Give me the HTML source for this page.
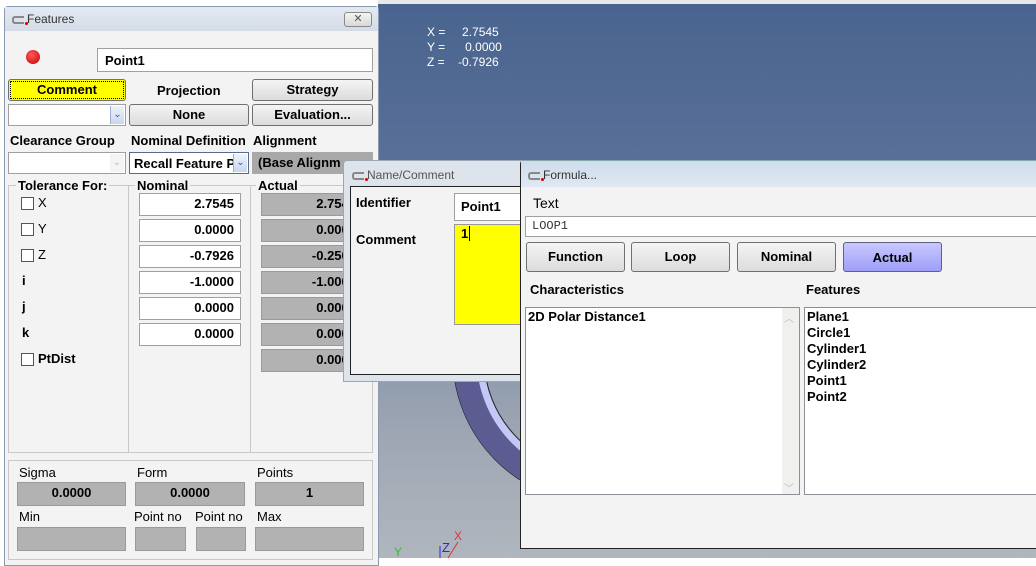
<!DOCTYPE html>
<html><head><meta charset="utf-8"><style>
*{box-sizing:border-box;margin:0;padding:0}
body{width:1036px;height:558px;overflow:hidden;position:relative;font-family:"Liberation Sans",sans-serif;font-size:13px;color:#000;background:#fff}
.a{position:absolute}
.b{font-weight:bold}
.btn{position:absolute;border:1px solid #707070;border-radius:3px;background:linear-gradient(#f4f4f4,#dcdcdc);font-weight:bold;text-align:center;line-height:20px;font-size:13px}
.inp{position:absolute;background:#fff;border:1px solid #a0a0a0}
.gray{position:absolute;background:#b2b2b2;border:1px solid #9a9a9a;text-align:right;padding-right:6px;font-weight:bold;line-height:20px}
.num{position:absolute;background:#fff;border:1px solid #a0a0a0;text-align:right;padding-right:6px;font-weight:bold;line-height:20px}
.cb{position:absolute;width:13px;height:13px;border:1px solid #555;background:#fff}
.arr{position:absolute;right:1px;top:1px;bottom:1px;width:14px;background:linear-gradient(#eef3fb,#c8d6ee);border-left:1px solid #9cb0d0;color:#3a5a99;font-size:10px;text-align:center;line-height:18px}
.title{position:absolute;font-size:12px;color:#333}
.ico{display:inline-block;width:12px;height:8px;border:2px solid #888;border-right:none;border-radius:3px 0 0 3px;position:relative;margin-right:3px;vertical-align:-1px}
.ico:after{content:"";position:absolute;right:-4px;bottom:-3px;width:3px;height:3px;background:#c00;border-radius:50%}
</style></head><body>
<!-- viewport -->
<div class="a" style="left:378px;top:0;width:658px;height:558px;background:linear-gradient(#48648e 0%,#5a7098 30%,#8090a8 55%,#a0a8b4 80%,#b0b6be 100%)"></div>
<div class="a" style="left:378px;top:0;width:658px;height:4px;background:#e8e8e8"></div>
<svg class="a" style="left:378px;top:0" width="658" height="558">
<circle cx="221" cy="357" r="146" fill="none" stroke="#111" stroke-width="1"/>
<circle cx="221" cy="357" r="134" fill="none" stroke="#5c5c92" stroke-width="24"/>
<circle cx="221" cy="357" r="119" fill="none" stroke="#c4c8f6" stroke-width="7"/>
<circle cx="221" cy="357" r="115" fill="none" stroke="#222" stroke-width="1"/>
<text x="64" y="552" fill="#2a2ad0" font-size="13" font-family="Liberation Sans">Z</text><text x="76" y="540" fill="#d03a3a" font-size="12" font-family="Liberation Sans">X</text><text x="16" y="556" fill="#30c030" font-size="12" font-family="Liberation Sans">Y</text><line x1="62" y1="546" x2="62" y2="558" stroke="#2a2ad0"/><line x1="80" y1="542" x2="70" y2="558" stroke="#d03a3a"/></svg>
<div class="a" style="left:427px;top:25px;color:#fff;font-size:12px;line-height:15px;white-space:pre">X =     2.7545
Y =      0.0000
Z =    -0.7926</div>

<!-- Features window -->
<div class="a" style="left:4px;top:6px;width:375px;height:560px;background:#f3f3f3;border:1px solid #8a9ab0;border-radius:4px 4px 0 0"></div>
<div class="a" style="left:5px;top:7px;width:373px;height:24px;background:linear-gradient(#e4eaf2,#d4dce8)"></div>
<div class="title" style="left:12px;top:12px"><span class="ico"></span>Features</div>
<div class="a" style="left:344px;top:12px;width:28px;height:15px;border:1px solid #8a8a8a;border-radius:3px;background:linear-gradient(#f4f4f4,#d8d8d8);text-align:center;font-size:11px;line-height:13px;color:#555">✕</div>
<div class="a" style="left:26px;top:50px;width:14px;height:14px;border-radius:50%;background:radial-gradient(circle at 40% 35%,#ff5a5a,#c00000)"></div>
<div class="inp" style="left:97px;top:48px;width:276px;height:24px;padding:4px 7px" ><span class="b">Point1</span></div>
<div class="btn" style="left:8px;top:79px;width:118px;height:22px;background:#ffff00;outline:1px dotted #000;outline-offset:-3px">Comment</div>
<div class="a b" style="left:157px;top:83px">Projection</div>
<div class="btn" style="left:252px;top:79px;width:121px;height:22px">Strategy</div>
<div class="inp" style="left:8px;top:104px;width:118px;height:22px"><div class="arr">⌄</div></div>
<div class="btn" style="left:129px;top:104px;width:120px;height:22px">None</div>
<div class="btn" style="left:252px;top:104px;width:121px;height:22px">Evaluation...</div>
<div class="a b" style="left:10px;top:133px">Clearance Group</div>
<div class="a b" style="left:131px;top:133px">Nominal Definition</div>
<div class="a b" style="left:253px;top:133px">Alignment</div>
<div class="inp" style="left:8px;top:152px;width:118px;height:22px"><div class="arr" style="background:#f4f4f4;border-left:none;color:#bbb">⌄</div></div>
<div class="inp" style="left:129px;top:152px;width:120px;height:22px;padding:3px 4px;border-color:#5a6a8a;white-space:nowrap;overflow:hidden"><span class="b">Recall Feature P</span><div class="arr">⌄</div></div>
<div class="a b" style="left:252px;top:152px;width:121px;height:22px;background:#a8a8a8;padding:3px 6px">(Base Alignm</div>
<!-- group -->
<div class="a" style="left:8px;top:185px;width:365px;height:268px;border:1px solid #c8c8c8"></div>
<div class="a" style="left:128px;top:185px;width:1px;height:268px;background:#c8c8c8"></div>
<div class="a" style="left:250px;top:185px;width:1px;height:268px;background:#c8c8c8"></div>
<div class="a b" style="left:16px;top:178px;background:#f3f3f3;padding:0 2px">Tolerance For:</div>
<div class="a b" style="left:135px;top:178px;background:#f3f3f3;padding:0 2px">Nominal</div>
<div class="a b" style="left:256px;top:178px;background:#f3f3f3;padding:0 2px">Actual</div>
<div class="cb" style="left:21px;top:197px"></div><div class="a" style="left:38px;top:195px">X</div>
<div class="cb" style="left:21px;top:223px"></div><div class="a" style="left:38px;top:221px">Y</div>
<div class="cb" style="left:21px;top:249px"></div><div class="a" style="left:38px;top:247px">Z</div>
<div class="a b" style="left:22px;top:273px">i</div>
<div class="a b" style="left:22px;top:299px">j</div>
<div class="a b" style="left:22px;top:325px">k</div>
<div class="cb" style="left:21px;top:353px"></div><div class="a b" style="left:38px;top:351px">PtDist</div>
<div class="num" style="left:139px;top:193px;width:102px;height:23px">2.7545</div>
<div class="num" style="left:139px;top:219px;width:102px;height:23px">0.0000</div>
<div class="num" style="left:139px;top:245px;width:102px;height:23px">-0.7926</div>
<div class="num" style="left:139px;top:271px;width:102px;height:23px">-1.0000</div>
<div class="num" style="left:139px;top:297px;width:102px;height:23px">0.0000</div>
<div class="num" style="left:139px;top:323px;width:102px;height:23px">0.0000</div>
<div class="gray" style="left:261px;top:193px;width:102px;height:23px">2.7545</div>
<div class="gray" style="left:261px;top:219px;width:102px;height:23px">0.0000</div>
<div class="gray" style="left:261px;top:245px;width:102px;height:23px">-0.2500</div>
<div class="gray" style="left:261px;top:271px;width:102px;height:23px">-1.0000</div>
<div class="gray" style="left:261px;top:297px;width:102px;height:23px">0.0000</div>
<div class="gray" style="left:261px;top:323px;width:102px;height:23px">0.0000</div>
<div class="gray" style="left:261px;top:349px;width:102px;height:23px">0.0000</div>
<!-- bottom group -->
<div class="a" style="left:8px;top:460px;width:365px;height:100px;border:1px solid #c8c8c8"></div>
<div class="a" style="left:19px;top:465px">Sigma</div>
<div class="a" style="left:137px;top:465px">Form</div>
<div class="a" style="left:257px;top:465px">Points</div>
<div class="gray" style="left:17px;top:482px;width:109px;height:24px;text-align:center;padding:0">0.0000</div>
<div class="gray" style="left:135px;top:482px;width:110px;height:24px;text-align:center;padding:0">0.0000</div>
<div class="gray" style="left:255px;top:482px;width:109px;height:24px;text-align:center;padding:0">1</div>
<div class="a" style="left:19px;top:509px">Min</div>
<div class="a" style="left:134px;top:509px">Point no</div>
<div class="a" style="left:195px;top:509px">Point no</div>
<div class="a" style="left:257px;top:509px">Max</div>
<div class="gray" style="left:17px;top:527px;width:109px;height:24px"></div>
<div class="gray" style="left:135px;top:527px;width:51px;height:24px"></div>
<div class="gray" style="left:196px;top:527px;width:50px;height:24px"></div>
<div class="gray" style="left:255px;top:527px;width:109px;height:24px"></div>

<!-- Name/Comment -->
<div class="a" style="left:343px;top:160px;width:190px;height:222px;background:#dde4ec;border:1px solid #9aa6b6;border-radius:4px 4px 0 0"></div>
<div class="title" style="left:352px;top:168px;color:#555"><span class="ico"></span>Name/Comment</div>
<div class="a" style="left:350px;top:186px;width:180px;height:189px;background:#f3f3f3;border:1px solid #222"></div>
<div class="a b" style="left:356px;top:195px">Identifier</div>
<div class="a b" style="left:356px;top:232px">Comment</div>
<div class="inp" style="left:454px;top:193px;width:76px;height:28px;padding:5px 6px"><span class="b">Point1</span></div>
<div class="a" style="left:454px;top:224px;width:76px;height:101px;background:#ffff00;border:1px solid #999;padding:1px 6px"><span class="b">1</span><span style="border-left:1px solid #000;margin-left:1px"></span></div>

<!-- Formula -->
<div class="a" style="left:520px;top:160px;width:520px;height:389px;background:#f3f3f3;border:1px solid #222;border-top:1px solid #8aa;border-radius:4px 0 0 0"></div>
<div class="a" style="left:521px;top:161px;width:515px;height:26px;background:linear-gradient(#cfdcec,#dfe8f2)"></div>
<div class="title" style="left:528px;top:168px"><span class="ico"></span>Formula...</div>
<div class="a" style="left:533px;top:195px;font-size:14px">Text</div>
<div class="inp" style="left:525px;top:216px;width:515px;height:21px;font-family:'Liberation Mono',monospace;font-size:12px;padding:2px 6px;color:#333">LOOP1</div>
<div class="btn" style="left:526px;top:242px;width:99px;height:30px;line-height:28px">Function</div>
<div class="btn" style="left:631px;top:242px;width:99px;height:30px;line-height:28px">Loop</div>
<div class="btn" style="left:737px;top:242px;width:99px;height:30px;line-height:28px">Nominal</div>
<div class="btn" style="left:843px;top:242px;width:99px;height:30px;line-height:30px;background:linear-gradient(#c8c8ff,#9e9ef8);border-color:#606080">Actual</div>
<div class="a b" style="left:530px;top:282px">Characteristics</div>
<div class="a b" style="left:806px;top:282px">Features</div>
<div class="a" style="left:525px;top:307px;width:275px;height:188px;background:#fff;border:1px solid #8a9096"></div>
<div class="a" style="left:782px;top:308px;width:17px;height:186px;background:#f0f0ee"></div>
<div class="a" style="left:784px;top:310px;color:#bbb;font-size:10px">︿</div>
<div class="a" style="left:784px;top:480px;color:#bbb;font-size:10px">﹀</div>
<div class="a b" style="left:528px;top:309px">2D Polar Distance1</div>
<div class="a" style="left:804px;top:307px;width:240px;height:188px;background:#fff;border:1px solid #8a9096"></div>
<div class="a b" style="left:807px;top:309px;line-height:16px">Plane1<br>Circle1<br>Cylinder1<br>Cylinder2<br>Point1<br>Point2</div>
</body></html>
